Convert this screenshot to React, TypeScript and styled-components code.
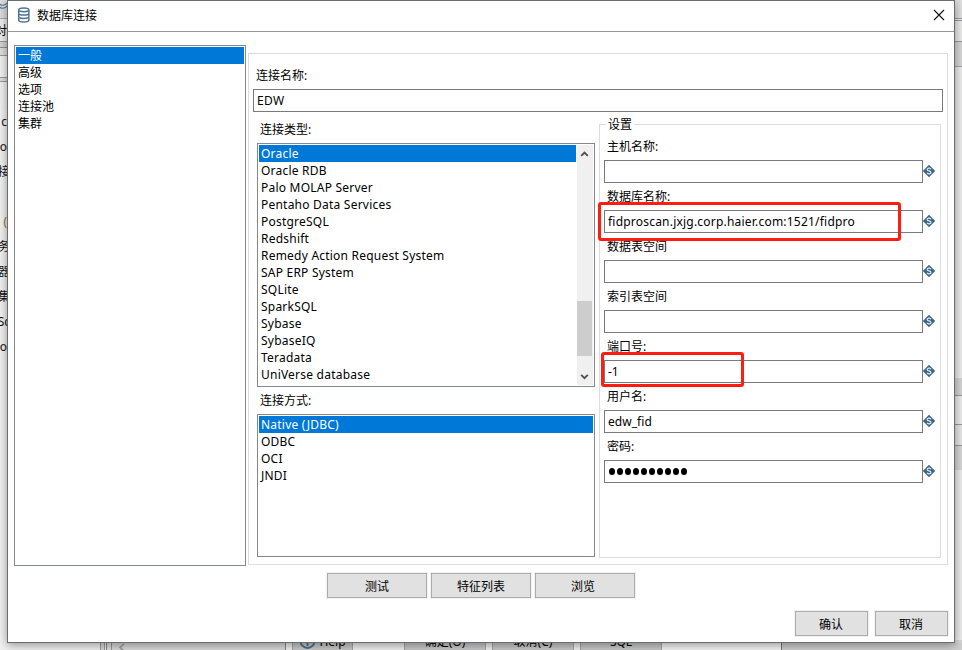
import React from 'react';
import styled, { createGlobalStyle } from 'styled-components';

const Global = createGlobalStyle`
  * { box-sizing: border-box; }
  body {
    margin: 0;
    overflow: hidden;
    background: #e4e4e4;
    color: #000;
    font: 12px/17px "Noto Sans", "Noto Sans CJK SC", sans-serif;
  }
`;

const Desktop = styled.div`
  display: grid;
  grid-template: 643px 7px / 7px 948px 7px;
  width: 962px;
  height: 650px;
  overflow: hidden;
`;

/* Parent window, visible around the dialog */
const LeftEdge = styled.div`
  display: flex;
  flex-direction: column;
  overflow: hidden;
  background: #f2f2f2;
`;

const RightEdge = styled.div`
  display: flex;
  flex-direction: column;
  overflow: hidden;
`;

const Band = styled.div<{ $h: number; $bg: string; $line?: string }>`
  flex: none;
  height: ${p => p.$h}px;
  background: ${p => p.$bg};
  border-bottom: ${p => (p.$line ? `1px solid ${p.$line}` : 'none')};
  display: flex;
  align-items: center;
  justify-content: flex-end;
  white-space: nowrap;
  overflow: hidden;
`;

const TreeText = styled.div<{ $color?: string }>`
  flex: none;
  height: 25px;
  line-height: 25px;
  display: flex;
  justify-content: flex-end;
  white-space: nowrap;
  color: ${p => p.$color || '#111'};

  span { margin-right: -3px; }
`;

const BottomEdge = styled.div`
  grid-column: 1 / 4;
  display: flex;
  height: 7px;
  overflow: hidden;
  background: #cfcfcf;
`;

const Strip = styled.div<{ $w: number; $bg: string; $edge?: string }>`
  flex: none;
  width: ${p => p.$w}px;
  height: 7px;
  background: ${p => p.$bg};
  border-right: ${p => (p.$edge ? `1px solid ${p.$edge}` : 'none')};
  display: flex;
  align-items: flex-end;
  overflow: hidden;
`;

const ParentButton = styled.div<{ $w: number }>`
  flex: none;
  width: ${p => p.$w}px;
  height: 7px;
  background: #c8c8c8;
  border: solid #a4a4a4;
  border-width: 0 1px;
  display: flex;
  justify-content: center;
  gap: 3px;
  overflow: hidden;
  white-space: nowrap;

  span { margin-top: -10px; line-height: 17px; }
  svg { flex: none; margin-top: -10px; }
`;

/* Dialog */
const Dialog = styled.section`
  z-index: 1;
  border: 1px solid #6b6c6e;
  background: #fff;
  box-shadow: 0 2px 9px rgba(0, 0, 0, 0.4);
  display: flex;
  flex-direction: column;
`;

const TitleBar = styled.header`
  flex: none;
  height: 31px;
  padding: 0 9px 1px 9px;
  border-bottom: 1px solid #989898;
  display: flex;
  align-items: center;
  gap: 6px;

  svg { flex: none; display: block; }
  svg:first-child { margin-top: -1px; }
  svg:last-child { margin-top: -2px; }
`;

const Title = styled.h1`
  flex: 1;
  margin: 0;
  font: inherit;
`;

const Body = styled.div`
  flex: none;
  height: 534px;
  padding: 13px 6px 0 6px;
  display: flex;
  align-items: flex-start;
  gap: 2px;
`;

const ListBox = styled.div<{ $w: number; $h: number }>`
  flex: none;
  width: ${p => p.$w}px;
  height: ${p => p.$h}px;
  border: 1px solid #828790;
  padding: 1px;
  display: flex;
`;

const Items = styled.ul`
  flex: 1;
  margin: 0;
  padding: 0;
  list-style: none;
`;

const Item = styled.li<{ $selected?: boolean }>`
  height: 17px;
  padding-left: 2px;
  line-height: 17px;
  white-space: nowrap;
  letter-spacing: 0.22px;
  background: ${p => (p.$selected ? '#0078d7' : 'transparent')};
  color: ${p => (p.$selected ? '#fff' : '#000')};
`;

const CjkItem = styled(Item)`
  letter-spacing: 0;
  line-height: 18px;
`;

const ScrollBar = styled.div`
  flex: none;
  width: 16px;
  margin-left: 1px;
  background: #f0f0f0;
  display: flex;
  flex-direction: column;

  svg { display: block; flex: none; }
`;

const Thumb = styled.div`
  flex: none;
  width: 15px;
  height: 55px;
  margin: 139px 0 12px;
  background: #cdcdcd;
`;

const Panel = styled.div`
  flex: none;
  width: 700px;
  height: 512px;
  margin-top: 8px;
  padding: 13px 4px 0 4px;
  border: 1px solid #dcdcdc;
`;

const Label = styled.label<{ $indent?: number }>`
  display: block;
  height: 17px;
  padding-left: ${p => p.$indent || 0}px;
  line-height: 18px;
  white-space: nowrap;
`;

const Input = styled.div<{ $w: number; $tracking?: number }>`
  flex: none;
  width: ${p => p.$w}px;
  height: 23px;
  padding-left: 3px;
  border: 1px solid #7a7a7a;
  line-height: 21px;
  letter-spacing: ${p => p.$tracking || 0}px;
  white-space: nowrap;
  display: flex;
  align-items: center;
`;

const NameInput = styled(Input)`
  margin-top: 5px;
`;

const Columns = styled.div`
  display: flex;
  gap: 4px;
  padding-left: 4px;
`;

const TypeColumn = styled.div`
  flex: none;
  width: 338px;
  padding-top: 9px;
  display: flex;
  flex-direction: column;
  gap: 5px;
`;

const Settings = styled.fieldset`
  position: relative;
  min-width: 0;
  width: 342px;
  height: 441px;
  margin: 5px 0 0;
  padding: 5px 0 0 4px;
  border: 1px solid #dcdcdc;

  legend {
    height: 15px;
    margin-left: 2px;
    padding: 0 2px;
    line-height: 15px;
  }
`;

const Field = styled.div`
  height: 50px;

  & > label { line-height: 19px; }
  & > div {
    margin-top: 6px;
    display: flex;
    align-items: center;
  }
  svg { display: block; flex: none; margin-top: -1px; }
`;

const Dots = styled.div`
  display: flex;
  gap: 2px;
  padding-left: 1px;

  i { width: 6px; height: 7px; border-radius: 50%; background: #000; }
`;

/* Highlight frames laid over the form */
const Highlight = styled.div<{ $x: number; $y: number; $w: number; $h: number }>`
  position: absolute;
  left: ${p => p.$x}px;
  top: ${p => p.$y}px;
  width: ${p => p.$w}px;
  height: ${p => p.$h}px;
  border: 3px solid #ff1d12;
  border-radius: 3px;
`;

const Actions = styled.div`
  display: flex;
  gap: 4px;
  margin: 7px 0 0 319px;
`;

const Footer = styled.footer`
  display: flex;
  justify-content: flex-end;
  gap: 7px;
  margin: 13px 6px 0 0;
`;

const Button = styled.button<{ $w: number; $shift?: number }>`
  width: ${p => p.$w}px;
  height: 25px;
  padding: 1px ${p => p.$shift || 0}px 0 0;
  border: 1px solid #adadad;
  background: #e1e1e1;
  box-shadow: 0 0 0 1px #f0f0f0;
  color: #000;
  font: inherit;
`;

const DatabaseIcon = () => (
  <svg width="14" height="16" viewBox="0 0 14 16" fill="#fff" stroke="#4d7390" strokeWidth="1.5">
    <path d="M1.7 10.5v2.4c0 1.2 2.3 2 5.1 2s5.1-.8 5.1-2v-2.4" />
    <path d="M1.7 7v2.6c0 1.2 2.3 1.8 5.1 1.8s5.1-.6 5.1-1.8V7" />
    <path d="M1.7 3.4v2.8c0 1.1 2.3 1.8 5.1 1.8s5.1-.7 5.1-1.8V3.4" />
    <ellipse cx="6.8" cy="2.8" rx="5.1" ry="1.9" />
  </svg>
);

const CloseIcon = () => (
  <svg width="12" height="12" viewBox="0 0 12 12" stroke="#111" strokeWidth="1.1">
    <path d="M1 1l10 10M11 1L1 11" />
  </svg>
);

const VariableIcon = () => (
  <svg width="12" height="12" viewBox="0 0 12 12" fill="none">
    <path d="M6 0L12 6 6 12 0 6z" fill="#3d6685" stroke="#3d6685" strokeWidth=".4" />
    <path d="M8 4.2C7.4 2.9 4.1 2.9 4.1 4.6 4.1 6.3 8 5.6 8 7.4 8 9.1 4.6 9.1 4 7.8" stroke="#dbe6ee" strokeWidth="1.2" />
    <path d="M6 2.2v1M6 8.7v1" stroke="#dbe6ee" strokeWidth="1" />
  </svg>
);

const Chevron = ({ up }: { up?: boolean }) => (
  <svg width="16" height="17" viewBox="0 0 16 17" fill="none" stroke="#505050" strokeWidth="1.9">
    <path d={up ? 'M4.2 10.8L7.5 7.5l3.3 3.3' : 'M4.2 6.8l3.3 3.3 3.3-3.3'} />
  </svg>
);

const categories = ['一般', '高级', '选项', '连接池', '集群'];
const databases = [
  'Oracle', 'Oracle RDB', 'Palo MOLAP Server', 'Pentaho Data Services', 'PostgreSQL',
  'Redshift', 'Remedy Action Request System', 'SAP ERP System', 'SQLite', 'SparkSQL',
  'Sybase', 'SybaseIQ', 'Teradata', 'UniVerse database',
];
const methods = ['Native (JDBC)', 'ODBC', 'OCI', 'JNDI'];
const fields: { label: string; value: React.ReactNode; tracking?: number }[] = [
  { label: '主机名称:', value: '' },
  { label: '数据库名称:', value: 'fidproscan.jxjg.corp.haier.com:1521/fidpro', tracking: 0.21 },
  { label: '数据表空间', value: '' },
  { label: '索引表空间', value: '' },
  { label: '端口号:', value: '-1' },
  { label: '用户名:', value: 'edw_fid', tracking: 0.05 },
  { label: '密码:', value: <Dots>{Array.from({ length: 10 }, (_, i) => <i key={i} />)}</Dots> },
];
const treeFragments = ['cl', 'o', '接', '', '(', '库务', '务器', '集', 'Sc', 'o'];
const clippedFragments = ['cl', '接', '库务', '务器', '集', 'Sc'];

export default function App() {
  return (
    <>
      <Global />
      <Desktop>
        <LeftEdge>
          <Band $h={19} $bg="#dcdcdc" $line="#aaa">
            <svg width="7" height="18" fill="none" stroke="#587b95" strokeWidth="1.2">
              <path d="M-2 3q5 5 10-1M-2 6q5 5 10-1" />
            </svg>
          </Band>
          <Band $h={23} $bg="#ededed" $line="#999">对</Band>
          <Band $h={6} $bg="#d3d3d3" $line="#8f8f8f" />
          <Band $h={8} $bg="#dedede" $line="#999" />
          <Band $h={22} $bg="#f2f2f2" $line="#999" />
          <Band $h={4} $bg="#ddd" $line="#999" />
          <Band $h={27} $bg="#f0f0f0" />
          {treeFragments.map((t, i) => (
            <TreeText key={i} $color={t === '(' ? '#9b7414' : undefined}>
              {clippedFragments.includes(t) ? <span>{t}</span> : t}
            </TreeText>
          ))}
        </LeftEdge>
        <Dialog>
          <TitleBar>
            <DatabaseIcon />
            <Title>数据库连接</Title>
            <CloseIcon />
          </TitleBar>
          <Body>
            <ListBox $w={232} $h={521}>
              <Items>
                {categories.map((c, i) => <CjkItem key={c} $selected={i === 0}>{c}</CjkItem>)}
              </Items>
            </ListBox>
            <Panel>
              <Label $indent={3}>连接名称:</Label>
              <NameInput $w={690} $tracking={0.3}>EDW</NameInput>
              <Columns>
                <TypeColumn>
                  <Label $indent={3}>连接类型:</Label>
                  <ListBox $w={338} $h={244}>
                    <Items>
                      {databases.map((d, i) => <Item key={d} $selected={i === 0}>{d}</Item>)}
                    </Items>
                    <ScrollBar>
                      <Chevron up />
                      <Thumb />
                      <Chevron />
                    </ScrollBar>
                  </ListBox>
                  <Label $indent={3}>连接方式:</Label>
                  <ListBox $w={338} $h={143}>
                    <Items>
                      {methods.map((m, i) => <Item key={m} $selected={i === 0}>{m}</Item>)}
                    </Items>
                  </ListBox>
                </TypeColumn>
                <Settings>
                  <legend>设置</legend>
                  {fields.map(f => (
                    <Field key={f.label}>
                      <Label $indent={3}>{f.label}</Label>
                      <div>
                        <Input $w={319} $tracking={f.tracking}>{f.value}</Input>
                        <VariableIcon />
                      </div>
                    </Field>
                  ))}
                  <Highlight $x={-2} $y={70} $w={303} $h={39} />
                  <Highlight $x={1} $y={220} $w={143} $h={35} />
                </Settings>
              </Columns>
            </Panel>
          </Body>
          <Actions>
            <Button $w={100}>测试</Button>
            <Button $w={100}>特征列表</Button>
            <Button $w={100} $shift={4}>浏览</Button>
          </Actions>
          <Footer>
            <Button $w={73} $shift={1}>确认</Button>
            <Button $w={73} $shift={1}>取消</Button>
          </Footer>
        </Dialog>
        <RightEdge>
          <Band $h={19} $bg="#e0e0e0" $line="#999ba5" />
          <Band $h={2} $bg="#eee" $line="#999" />
          <Band $h={21} $bg="#ebebeb" $line="#999" />
          <Band $h={25} $bg="#d7d7d7" $line="#a0a1aa" />
          <Band $h={311} $bg="#ececec" />
          <Band $h={18} $bg="#d4d4d4" $line="#999" />
          <Band $h={29} $bg="#ececec" $line="#999" />
          <Band $h={21} $bg="#e6e6e6" $line="#999" />
          <Band $h={24} $bg="#d6d6d6" />
          <Band $h={170} $bg="#ececec" />
          <Band $h={3} $bg="#d6d6d6" />
        </RightEdge>
        <BottomEdge>
          <Strip $w={101} $bg="#f2f2f2" $edge="#9a9ba3" />
          <Strip $w={4} $bg="#d8d8d8" $edge="#999" />
          <Strip $w={2} $bg="#eee" $edge="#888" />
          <Strip $w={5} $bg="#ddd" $edge="#999" />
          <Strip $w={174} $bg="#dadada" $edge="#888">
            <svg width="20" height="7" fill="none" stroke="#999" strokeWidth="1.6">
              <path d="M12 1L8 4.5 12 8" />
            </svg>
          </Strip>
          <Strip $w={6} $bg="#f0f0f0" />
          <ParentButton $w={61}>
            <svg width="17" height="17" fill="none" stroke="#46708f" strokeWidth="1.8">
              <circle cx="8.5" cy="8" r="7" /><path d="M8.5 7v6" />
            </svg>
            <span>Help</span>
          </ParentButton>
          <Strip $w={51} $bg="#f0f0f0" />
          <ParentButton $w={82}><span>确定(O)</span></ParentButton>
          <Strip $w={6} $bg="#f0f0f0" />
          <ParentButton $w={82}><span>取消(C)</span></ParentButton>
          <Strip $w={6} $bg="#f0f0f0" />
          <ParentButton $w={82}><span>SQL</span></ParentButton>
          <Strip $w={120} $bg="#f5f5f5" $edge="#777" />
        </BottomEdge>
      </Desktop>
    </>
  );
}
